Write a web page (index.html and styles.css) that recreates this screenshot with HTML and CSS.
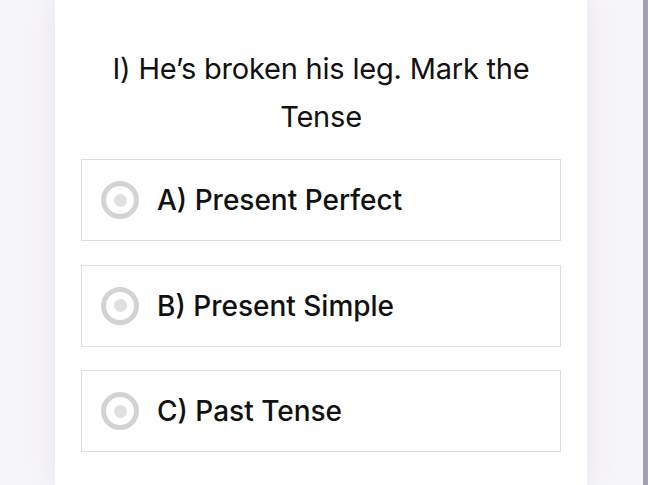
FILE: index.html
```html
<!DOCTYPE html>
<html>
    <head>
        <title>Quiz</title>
        <link rel="stylesheet" href="styles.css">
    </head>
    <body>
        <div class="page">
            <div class="card">
                <div class="question">I) He’s broken his leg. Mark the Tense</div>
                <div class="option">
                    <span class="radio"><span class="dot"></span></span>
                    <span class="label">A) Present Perfect</span>
                </div>
                <div class="option">
                    <span class="radio"><span class="dot"></span></span>
                    <span class="label">B) Present Simple</span>
                </div>
                <div class="option">
                    <span class="radio"><span class="dot"></span></span>
                    <span class="label">C) Past Tense</span>
                </div>
            </div>
        </div>
        <div class="strip"></div>
    </body>
</html>
```

FILE: styles.css
```css
html, body {
    margin: 0;
    height: 100%;
    overflow: hidden;
}
body {
    display: flex;
    font-family: Inter, "Noto Sans", sans-serif;
    color: #111;
    background-color: #f6f5f8;
}
.page {
    flex: 1;
    padding-left: 55px;
    background-color: #f6f5f8;
}
.strip {
    width: 5px;
    background-color: #a39fb2;
}
.card {
    box-sizing: border-box;
    width: 532px;
    height: 100%;
    padding: 45px 26px 0;
    background-color: white;
    box-shadow: 0 0 28px rgba(140, 90, 140, 0.10);
}
.question {
    font-size: 29px;
    font-weight: 400;
    line-height: 48px;
    text-align: center;
    letter-spacing: -0.2px;
    padding: 0 30px;
    margin-bottom: 18px;
}
.option {
    display: flex;
    align-items: center;
    height: 80px;
    border: 1px solid #dddddd;
    padding-left: 19px;
    margin-bottom: 23.5px;
}
.radio {
    width: 28px;
    height: 28px;
    border: 5px solid #d3d3d3;
    border-radius: 50%;
    display: flex;
    align-items: center;
    justify-content: center;
    margin-right: 18px;
}
.dot {
    width: 13px;
    height: 13px;
    border-radius: 50%;
    background-color: #e0e0e0;
}
.label {
    font-size: 28px;
    font-weight: 500;
    letter-spacing: 0;
}
```
